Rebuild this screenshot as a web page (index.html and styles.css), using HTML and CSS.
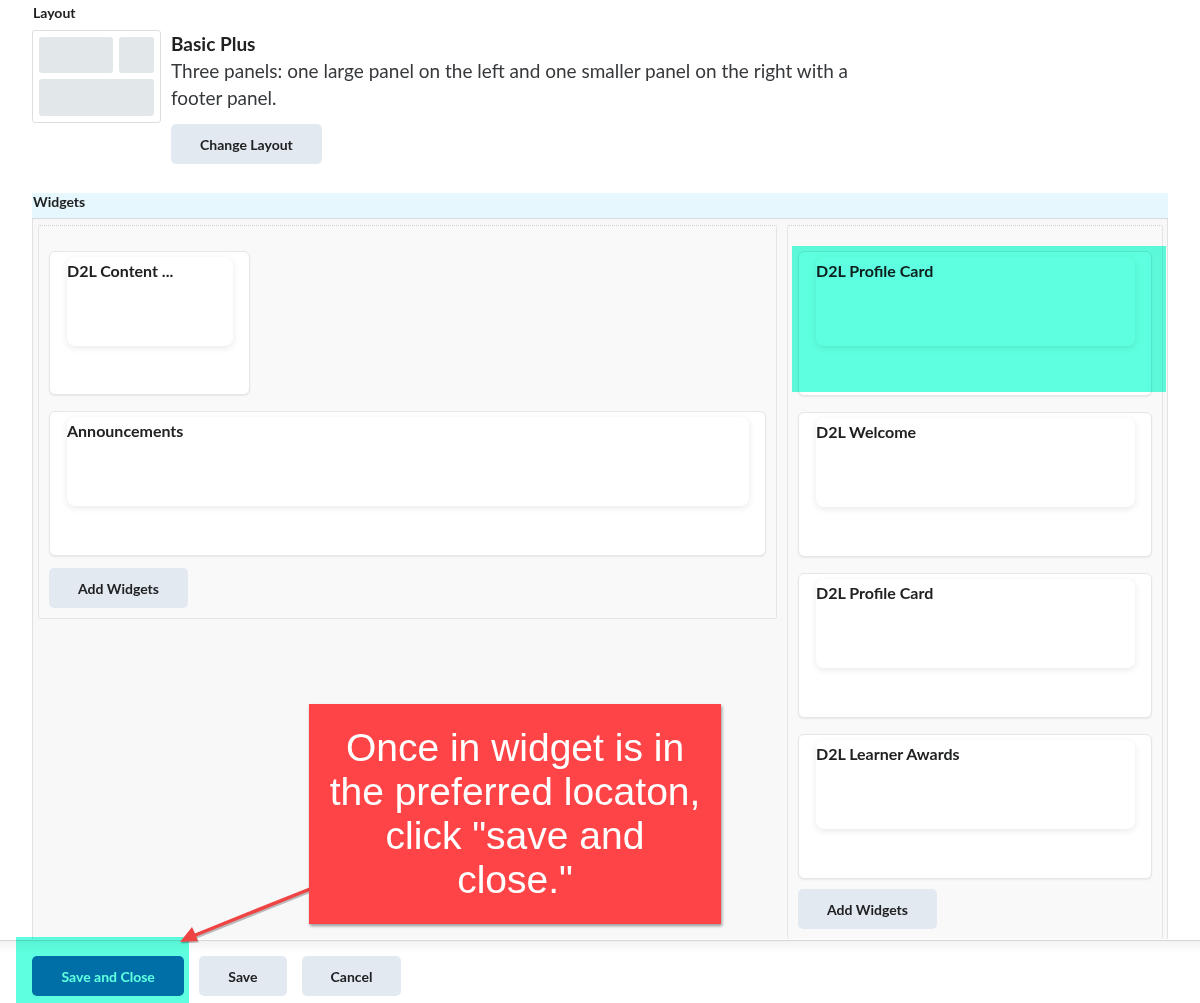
FILE: index.html
```html
<!DOCTYPE html>
<html lang="en">
<head>
<meta charset="utf-8">
<title>Homepage layout</title>
<link rel="stylesheet" href="styles.css">
</head>
<body>
<div class="page">
  <main class="main">
    <div class="section-label">Layout</div>
    <div class="layout-row">
      <div class="thumb">
        <span class="tp tp-a"></span>
        <span class="tp tp-b"></span>
        <span class="tp tp-c"></span>
      </div>
      <div class="layout-info">
        <h2 class="layout-title">Basic Plus</h2>
        <p class="layout-desc">Three panels: one large panel on the left and one smaller panel on the right with a footer panel.</p>
        <button class="btn btn-layout">Change Layout</button>
      </div>
    </div>

    <div class="widgets-head">Widgets</div>
    <div class="widgets-area">
      <div class="panel panel-main">
        <div class="card card-small"><div class="card-inner"><div class="card-title">D2L Content ...</div></div></div>
        <div class="card"><div class="card-inner"><div class="card-title">Announcements</div></div></div>
        <div class="panel-actions"><button class="btn">Add Widgets</button></div>
      </div>
      <div class="panel panel-side">
        <div class="card"><div class="card-inner"><div class="card-title">D2L Profile Card</div></div></div>
        <div class="card"><div class="card-inner"><div class="card-title">D2L Welcome</div></div></div>
        <div class="card"><div class="card-inner"><div class="card-title">D2L Profile Card</div></div></div>
        <div class="card"><div class="card-inner"><div class="card-title">D2L Learner Awards</div></div></div>
        <div class="panel-actions panel-actions-side"><button class="btn">Add Widgets</button></div>
      </div>
    </div>
  </main>

  <footer class="footer">
    <button class="btn btn-primary">Save and Close</button>
    <button class="btn">Save</button>
    <button class="btn">Cancel</button>
  </footer>
</div>

<div class="highlight highlight-card"></div>
<div class="highlight highlight-save"></div>

<svg class="arrow" width="1200" height="1003" viewBox="0 0 1200 1003" aria-hidden="true">
  <line x1="320" y1="885" x2="193" y2="936" stroke="rgba(0,0,0,0.25)" stroke-width="4" transform="translate(1,1.5)"/>
  <polygon points="180,942 198,941 192,927" fill="rgba(0,0,0,0.25)" transform="translate(1,1.5)"/>
  <line x1="320" y1="885" x2="193" y2="936" stroke="#ef4444" stroke-width="3.5"/>
  <polygon points="180,942 198,941 192,927" fill="#ef4444"/>
</svg>

<div class="callout">Once in widget is in the preferred locaton, click "save and close."</div>
</body>
</html>
```

FILE: styles.css
```css
* { box-sizing: border-box; }

html, body {
  margin: 0;
  padding: 0;
  background: #ffffff;
}

body {
  font-family: Lato, "Noto Sans", "Liberation Sans", sans-serif;
  color: #202122;
  width: 1200px;
  height: 1003px;
  overflow: hidden;
  position: relative;
}

.page {
  display: flex;
  flex-direction: column;
  height: 1003px;
}

.main {
  padding: 0 32px;
  height: 940px;
}

.section-label {
  font-size: 14px;
  font-weight: 700;
  line-height: 18px;
  padding-top: 4px;
  padding-left: 1px;
}

.layout-row {
  display: flex;
  gap: 10px;
  margin-top: 8px;
  align-items: flex-start;
}

.thumb {
  width: 129px;
  height: 93px;
  border: 1px solid #dcdee0;
  border-radius: 3px;
  background: #fff;
  padding: 6px 6px 5px 6px;
  display: grid;
  grid-template-columns: 74px 35px;
  grid-template-rows: 36px 37px;
  column-gap: 6px;
  row-gap: 6px;
}

.tp {
  background: #e2e7e9;
  border-radius: 3px;
  display: block;
}

.tp-c { grid-column: 1 / 3; }

.layout-info {
  display: flex;
  flex-direction: column;
  align-items: flex-start;
}

.layout-title {
  margin: 0;
  font-size: 19px;
  line-height: 27px;
  font-weight: 700;
  color: #202122;
}

.layout-desc {
  margin: 0;
  max-width: 700px;
  font-size: 19px;
  line-height: 27px;
  color: #36393c;
}

.btn {
  font-family: Lato, "Noto Sans", "Liberation Sans", sans-serif;
  font-size: 14px;
  font-weight: 700;
  height: 40px;
  padding: 0 29px;
  border: none;
  border-radius: 5px;
  background: #e3e9f1;
  color: #202122;
  cursor: pointer;
}

.btn-layout { margin-top: 13px; }

.btn-primary {
  background: #006fbf;
  color: #ffffff;
  padding: 0 29.5px;
}

.widgets-head {
  margin-top: 29px;
  height: 26px;
  background: #e6f7fd;
  border-bottom: 1px solid #d5dbe0;
  font-size: 14px;
  font-weight: 700;
  line-height: 18px;
  padding-left: 1px;
}

.widgets-area {
  display: grid;
  grid-template-columns: 739px 376px;
  column-gap: 10px;
  align-items: start;
  background: #f8f8f8;
  border-left: 1px solid #e2e2e2;
  border-right: 1px solid #e2e2e2;
  padding: 6px 5px 0 5px;
  height: 720px;
}

.panel {
  background: #f9f9f9;
  border: 1px dotted #cfd2d4;
  border-radius: 2px;
  padding: 25px 10px 10px 10px;
  display: flex;
  flex-direction: column;
  gap: 16px;
}

.panel-side {
  border-bottom: none;
  height: 714px;
}

.panel-actions {
  margin-top: -4px;
}

.panel-actions-side {
  margin-top: -6px;
}

.card {
  background: #ffffff;
  border: 1px solid #e3e6ea;
  border-radius: 6px;
  box-shadow: 0 1px 2px rgba(0, 0, 0, 0.07);
  height: 145px;
  padding: 5px 16px 0 17px;
}

.card-small {
  width: 201px;
  height: 144px;
}

.card-inner {
  height: 89px;
  border-radius: 8px;
  background: #fff;
  box-shadow: 0 2px 7px rgba(0, 0, 0, 0.09);
  padding-top: 4px;
  overflow: hidden;
}

.card-title {
  font-size: 16px;
  font-weight: 700;
  line-height: 20px;
  color: #202122;
  white-space: nowrap;
}

.footer {
  height: 63px;
  border-top: 1px solid #d6d6d6;
  background: linear-gradient(#f3f3f3, #ffffff 12px);
  padding: 15px 32px 0 32px;
  display: flex;
  gap: 15px;
  align-items: flex-start;
}

.highlight {
  position: absolute;
  background: #5dffe0;
  mix-blend-mode: multiply;
  pointer-events: none;
}

.highlight-card {
  left: 792px;
  top: 246px;
  width: 374px;
  height: 146px;
}

.highlight-save {
  left: 16px;
  top: 937px;
  width: 173px;
  height: 66px;
}

.arrow {
  position: absolute;
  left: 0;
  top: 0;
  pointer-events: none;
}

.callout {
  position: absolute;
  left: 309px;
  top: 704px;
  width: 412px;
  height: 220px;
  padding: 22px 18px;
  background: #fe4446;
  box-shadow: 1px 2px 3px rgba(0, 0, 0, 0.4);
  color: #ffffff;
  font-family: "Liberation Sans", Arial, sans-serif;
  font-size: 39px;
  line-height: 44px;
  text-align: center;
}
```
